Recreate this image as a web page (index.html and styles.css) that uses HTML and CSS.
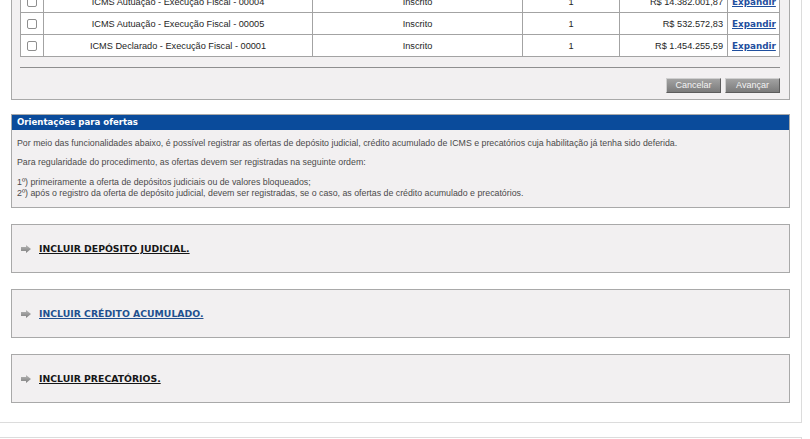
FILE: index.html
```html
<!DOCTYPE html>
<html lang="pt-BR">
<head>
<meta charset="utf-8">
<title>Ofertas</title>
<link rel="stylesheet" href="styles.css">
</head>
<body>
<div class="page">
  <div class="box grid-box">
    <div class="table">
      <div class="row">
        <div class="cell"><input type="checkbox" class="chk"></div>
        <div class="cell">ICMS Autuação - Execução Fiscal - 00004</div>
        <div class="cell">Inscrito</div>
        <div class="cell">1</div>
        <div class="cell cell-value">R$ 14.382.001,87</div>
        <div class="cell cell-link"><a href="#" class="expand">Expandir</a></div>
      </div>
      <div class="row">
        <div class="cell"><input type="checkbox" class="chk"></div>
        <div class="cell">ICMS Autuação - Execução Fiscal - 00005</div>
        <div class="cell">Inscrito</div>
        <div class="cell">1</div>
        <div class="cell cell-value">R$ 532.572,83</div>
        <div class="cell cell-link"><a href="#" class="expand">Expandir</a></div>
      </div>
      <div class="row">
        <div class="cell"><input type="checkbox" class="chk"></div>
        <div class="cell">ICMS Declarado - Execução Fiscal - 00001</div>
        <div class="cell">Inscrito</div>
        <div class="cell">1</div>
        <div class="cell cell-value">R$ 1.454.255,59</div>
        <div class="cell cell-link"><a href="#" class="expand">Expandir</a></div>
      </div>
    </div>
    <div class="sep"></div>
    <div class="actions">
      <button type="button" class="btn btn-cancel">Cancelar</button>
      <button type="button" class="btn btn-next">Avançar</button>
    </div>
  </div>

  <div class="box info">
    <div class="info-head">Orientações para ofertas</div>
    <div class="info-body">
      <p>Por meio das funcionalidades abaixo, é possível registrar as ofertas de depósito judicial, crédito acumulado de ICMS e precatórios cuja habilitação já tenha sido deferida.</p>
      <p>Para regularidade do procedimento, as ofertas devem ser registradas na seguinte ordem:</p>
      <p class="steps">1º) primeiramente a oferta de depósitos judiciais ou de valores bloqueados;<br>2º) após o registro da oferta de depósito judicial, devem ser registradas, se o caso, as ofertas de crédito acumulado e precatórios.</p>
    </div>
  </div>

  <div class="box action-box">
    <svg class="arrow" width="10" height="8" viewBox="0 0 10 8"><defs><linearGradient id="ag1" x1="0" y1="0" x2="0" y2="1"><stop offset="0" stop-color="#b8b8b8"/><stop offset="1" stop-color="#7e7e7e"/></linearGradient></defs><path d="M0 2H5V0L10 4L5 8V6H0Z" fill="url(#ag1)"/></svg>
    <a href="#" class="action-link">INCLUIR DEPÓSITO JUDICIAL.</a>
  </div>
  <div class="box action-box">
    <svg class="arrow" width="10" height="8" viewBox="0 0 10 8"><path d="M0 2H5V0L10 4L5 8V6H0Z" fill="url(#ag1)"/></svg>
    <a href="#" class="action-link visited">INCLUIR CRÉDITO ACUMULADO.</a>
  </div>
  <div class="box action-box">
    <svg class="arrow" width="10" height="8" viewBox="0 0 10 8"><path d="M0 2H5V0L10 4L5 8V6H0Z" fill="url(#ag1)"/></svg>
    <a href="#" class="action-link">INCLUIR PRECATÓRIOS.</a>
  </div>
</div>
<div class="footer"></div>
</body>
</html>
```
FILE: styles.css
```css
* { box-sizing: border-box; }
html, body { margin: 0; padding: 0; background: #fff; }
body { font-family: "Liberation Sans", Arial, sans-serif; color: #222; overflow: hidden; }

.page {
  width: 802px;
  margin-top: -20px;
  padding: 0 0 19px 11px;
  border-right: 1px solid #dcdcdc;
  border-bottom: 1px solid #dcdcdc;
}

.box {
  width: 779px;
  border: 1px solid #a9a9a9;
  background: #f2f0f1;
}

.grid-box { padding: 9px 9px 6px 8px; }

.table {
  border-top: 1px solid #a3a3a3;
  border-left: 1px solid #a3a3a3;
  background: #fff;
}
.row {
  display: grid;
  grid-template-columns: 23px 269px 210px 97px 108px 52px;
}
.cell {
  height: 22px;
  border-right: 1px solid #a3a3a3;
  border-bottom: 1px solid #a3a3a3;
  display: flex;
  align-items: center;
  justify-content: center;
  padding: 0 4px;
  font-size: 9.2px;
  color: #1e1e1e;
  white-space: nowrap;
}
.cell-value { justify-content: flex-end; }
.cell-link { justify-content: flex-start; padding: 0 0 0 4px; }

.chk {
  appearance: none;
  -webkit-appearance: none;
  width: 10px;
  height: 10px;
  margin: 0;
  border: 1px solid #8e8e8e;
  border-radius: 2px;
  background: #fff;
}

.expand {
  font-family: "DejaVu Sans", Verdana, sans-serif;
  font-weight: bold;
  font-size: 8.8px;
  color: #1f4f9e;
  text-decoration: underline;
}

.sep { margin-top: 10px; border-top: 1px solid #8f8f8f; }

.actions {
  display: flex;
  justify-content: flex-end;
  gap: 4px;
  margin-top: 10px;
}
.btn {
  height: 15px;
  padding: 0;
  font-family: "Liberation Sans", Arial, sans-serif;
  font-size: 9px;
  line-height: 13px;
  color: #f4f4f4;
  background: linear-gradient(#a2a2a2, #7b7b7b);
  border: 1px solid;
  border-color: #cfcfcf #5c5c5c #5c5c5c #cfcfcf;
}
.btn-cancel { width: 55px; }
.btn-next { width: 55px; }

.info { margin-top: 14px; }
.info-head {
  height: 15px;
  line-height: 15px;
  padding-left: 5px;
  background: #0a4b9b;
  color: #fff;
  font-family: "DejaVu Sans", Verdana, sans-serif;
  font-weight: bold;
  font-size: 8.6px;
}
.info-body {
  padding: 8px 5px 8px;
  font-size: 8.8px;
  line-height: 11px;
  color: #4a4a4a;
}
.info-body p { margin: 8px 0 0; }
.info-body p:first-child { margin-top: 0; }
.info-body p.steps { margin-top: 9px; }

.action-box {
  margin-top: 16px;
  height: 49px;
  display: flex;
  align-items: center;
  gap: 8px;
  padding-left: 9px;
}
.arrow { display: block; flex: none; }
.action-link {
  font-family: "DejaVu Sans", Verdana, sans-serif;
  font-weight: bold;
  font-size: 9.3px;
  color: #161616;
  text-decoration: underline;
}
.action-link.visited { color: #21508f; }

.footer {
  width: 802px;
  height: 10px;
  margin-top: 14px;
  border-top: 1px solid #dcdcdc;
  border-right: 1px solid #dcdcdc;
}
```
